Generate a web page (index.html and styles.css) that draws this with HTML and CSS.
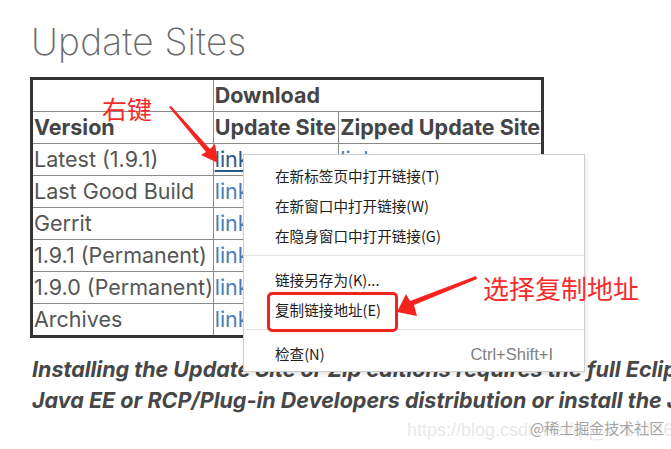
FILE: index.html
```html
<!DOCTYPE html>
<html lang="en">
<head>
<meta charset="utf-8">
<title>Update Sites</title>
<link rel="stylesheet" href="styles.css">
</head>
<body>
<div class="page">
  <h1 class="title">Update Sites</h1>
  <table class="sites">
    <colgroup><col class="c1"><col class="c2"><col class="c3"></colgroup>
    <tr><th></th><th colspan="2">Download</th></tr>
    <tr><th>Version</th><th>Update Site</th><th>Zipped Update Site</th></tr>
    <tr><td>Latest (1.9.1)</td><td><a class="hover" href="#">link</a></td><td><a href="#">link</a></td></tr>
    <tr><td>Last Good Build</td><td><a href="#">link</a></td><td><a href="#">link</a></td></tr>
    <tr><td>Gerrit</td><td><a href="#">link</a></td><td><a href="#">link</a></td></tr>
    <tr><td>1.9.1 (Permanent)</td><td><a href="#">link</a></td><td><a href="#">link</a></td></tr>
    <tr><td>1.9.0 (Permanent)</td><td><a href="#">link</a></td><td><a href="#">link</a></td></tr>
    <tr><td>Archives</td><td><a href="#">link</a></td><td><a href="#">link</a></td></tr>
  </table>
  <p class="note">Installing the Update Site or Zip editions requires the full Eclipse IDE for<br>Java EE or RCP/Plug-in Developers distribution or install the JDT and PDE</p>

  <div class="menu">
    <div class="item">在新标签页中打开链接(T)</div>
    <div class="item">在新窗口中打开链接(W)</div>
    <div class="item">在隐身窗口中打开链接(G)</div>
    <div class="sep"></div>
    <div class="item">链接另存为(K)...</div>
    <div class="item">复制链接地址(E)</div>
    <div class="sep"></div>
    <div class="item"><span>检查(N)</span><span class="key">Ctrl+Shift+I</span></div>
  </div>
  <div class="highlight"></div>

  <div class="label label-right-click">右键</div>
  <div class="label label-copy">选择复制地址</div>
  <svg class="arrows" width="671" height="449" viewBox="0 0 671 449">
    <polygon fill="#f5231f" points="169,107 171,106 210,149 215,144 218,163 201,155 206,152"/>
    <polygon fill="#f5231f" points="476,276 477,279 414,305 417,316 397,312 406,294 410,301"/>
  </svg>

  <div class="watermark"><span class="wm-url">https://blog.csdn.net/qq_40147863</span><span class="wm-brand">@稀土掘金技术社区</span></div>
</div>
</body>
</html>
```

FILE: styles.css
```css
html, body {
  margin: 0;
  padding: 0;
  background: #ffffff;
}
body {
  width: 671px;
  height: 449px;
  overflow: hidden;
  font-family: "Inter", "Noto Sans", sans-serif;
}
.page {
  position: relative;
  width: 671px;
  height: 449px;
  padding-left: 30px;
  box-sizing: border-box;
  overflow: hidden;
}
.title {
  margin: 0;
  padding: 19px 0 0 1px;
  height: 77px;
  box-sizing: border-box;
  font-family: "Inter", sans-serif;
  font-weight: 200;
  font-size: 37px;
  line-height: 46px;
  color: #6a6a6a;
  letter-spacing: 0.2px;
}
.sites {
  border-collapse: collapse;
  border: 3px solid #333333;
  table-layout: fixed;
  width: 514px;
}
.c1 { width: 181px; }
.c2 { width: 125px; }
.c3 { width: 203px; }
.sites th, .sites td {
  border: 1px solid #8a8a8a;
  height: 31px;
  padding: 0 0 0 1px;
  text-align: left;
  white-space: nowrap;
  overflow: hidden;
  font-size: 21.5px;
  line-height: 31px;
}
.sites th {
  font-weight: 700;
  color: #454545;
}
.sites td {
  font-weight: 400;
  color: #555555;
}
.sites a {
  color: #4b7db3;
  text-decoration: none;
}
.sites a.hover {
  color: #2c5a86;
  text-decoration: underline;
  text-decoration-thickness: 2px;
  text-underline-offset: 3px;
}
.note {
  margin: 16px 0 0 2px;
  font-size: 21.5px;
  line-height: 31px;
  font-weight: 700;
  font-style: italic;
  color: #474747;
  white-space: nowrap;
}
.menu {
  position: absolute;
  left: 243px;
  top: 154px;
  width: 342px;
  box-sizing: border-box;
  padding: 6px 0 2px;
  background: #ffffff;
  border: 1px solid #cfcfcf;
  box-shadow: 1px 2px 4px rgba(0,0,0,0.12);
  font-family: "Noto Sans CJK SC", "Noto Sans", sans-serif;
  font-size: 14.6px;
  color: #202020;
}
.item {
  height: 30px;
  line-height: 30px;
  padding: 0 31px 0 31px;
  display: flex;
  justify-content: space-between;
}
.key {
  color: #808080;
  font-family: "Liberation Sans", sans-serif;
  font-size: 16.5px;
}
.sep {
  height: 1px;
  background: #e3e3e3;
  margin: 4px 0 9px;
}
.highlight {
  position: absolute;
  left: 267px;
  top: 292px;
  width: 131px;
  height: 40px;
  box-sizing: border-box;
  border: 3px solid #f02320;
  border-radius: 5px;
}
.label {
  position: absolute;
  font-family: "Noto Sans CJK SC", sans-serif;
  color: #f52a2a;
  white-space: nowrap;
}
.label-right-click {
  left: 102px;
  top: 91px;
  font-size: 25px;
  line-height: 34px;
}
.label-copy {
  left: 483px;
  top: 270px;
  font-size: 26px;
  line-height: 36px;
}
.arrows {
  position: absolute;
  left: 0;
  top: 0;
  pointer-events: none;
}
.watermark {
  position: absolute;
  left: 407px;
  top: 416px;
  white-space: nowrap;
  height: 28px;
}
.wm-url {
  font-family: "Liberation Sans", sans-serif;
  font-size: 18px;
  line-height: 28px;
  color: #e9e9e9;
}
.wm-brand {
  position: absolute;
  left: 123px;
  top: 0;
  font-family: "Noto Sans CJK SC", sans-serif;
  font-size: 15px;
  line-height: 24px;
  color: #a4a4a4;
  text-shadow: 0 0 2px #ffffff;
}
```
